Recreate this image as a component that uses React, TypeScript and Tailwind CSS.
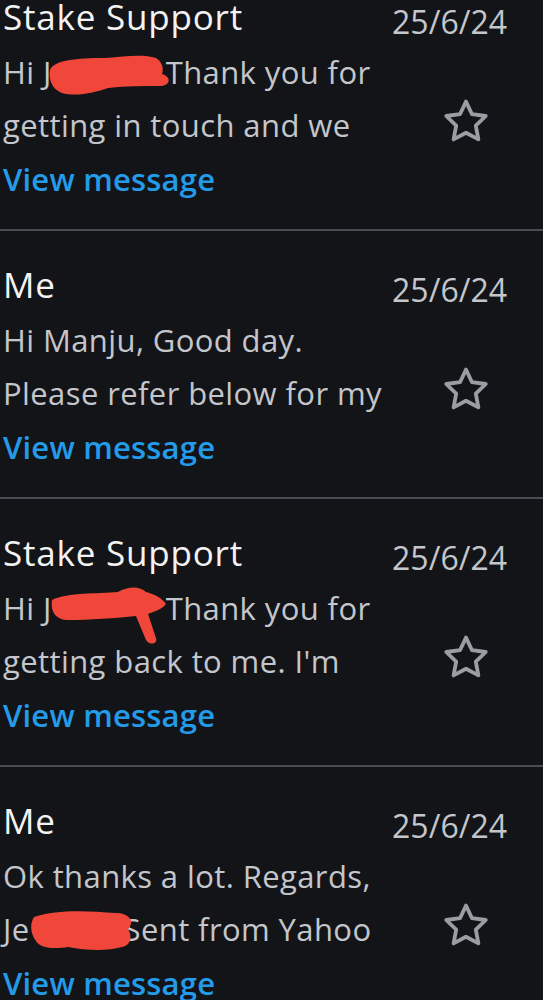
import React from "react";

const Star = () => (
  <svg width="48" height="46" viewBox="0 0 24 23" fill="none" stroke="#9a9da2" strokeWidth="1.9" strokeLinejoin="round">
    <path d="M12 1.8l3 6.3 6.9.9-5 4.8 1.3 6.9L12 17.4l-6.2 3.3 1.3-6.9-5-4.8 6.9-.9z" />
  </svg>
);

const Redact = ({ w, variant }: { w: number; variant: number }) => (
  <span className="relative inline-block align-baseline" style={{ width: w }}>
    &nbsp;
    {variant === 1 && (
      <svg className="absolute left-[-6px] top-[6px]" width="130" height="46" viewBox="0 0 130 46">
        <path d="M4 18 C8 8 30 6 60 6 C80 4 98 2 110 6 C116 10 118 16 116 22 C124 24 126 32 116 34 C98 34 80 34 62 36 C50 40 36 44 20 42 C8 40 2 30 4 18 Z" fill="#f0473a" />
      </svg>
    )}
    {variant === 2 && (
      <svg className="absolute left-[-4px] top-[2px]" width="130" height="64" viewBox="0 0 130 64">
        <path d="M4 16 C20 8 50 10 70 8 C80 2 92 2 98 8 C106 10 114 14 118 20 C114 26 104 28 100 30 L108 54 C110 60 102 62 98 56 L88 32 C70 34 40 36 20 36 C8 36 2 28 4 16 Z" fill="#f0473a" />
      </svg>
    )}
    {variant === 3 && (
      <svg className="absolute left-[-2px] top-[4px]" width="110" height="48" viewBox="0 0 110 48">
        <path d="M6 10 C30 2 60 4 88 6 C100 6 108 14 100 22 C104 28 104 38 94 40 C80 44 60 44 40 40 C28 42 12 42 8 34 C2 26 2 16 6 10 Z" fill="#f0473a" />
      </svg>
    )}
  </span>
);

type Row = {
  title: string;
  line1: React.ReactNode;
  line2: React.ReactNode;
};

const rows: Row[] = [
  {
    title: "Stake Support",
    line1: (
      <>
        Hi J<Redact w={114} variant={1} />Thank you for
      </>
    ),
    line2: "getting in touch and we",
  },
  {
    title: "Me",
    line1: "Hi Manju, Good day.",
    line2: "Please refer below for my",
  },
  {
    title: "Stake Support",
    line1: (
      <>
        Hi J<Redact w={114} variant={2} />Thank you for
      </>
    ),
    line2: "getting back to me. I'm",
  },
  {
    title: "Me",
    line1: "Ok thanks a lot. Regards,",
    line2: (
      <>
        Je<Redact w={94} variant={3} />Sent from Yahoo
      </>
    ),
  },
];

export default function App() {
  return (
    <div
      className="w-[543px] h-[1000px] overflow-hidden bg-[#131418]"
      style={{ fontFamily: '"Open Sans", "Noto Sans", sans-serif' }}
    >
      <div className="-mt-[37px]">
        {rows.map((r, i) => (
          <div key={i} className={`flex pl-[3px] pr-[36px] pt-[24px] pb-[22px] ${i > 0 ? "border-t-2 border-[#4b4c51]" : ""}`}>
            <div className="flex-1 min-w-0">
              <div className="text-[35px] leading-[59px] tracking-[0.8px] text-[#f3f3f3] whitespace-nowrap">{r.title}</div>
              <div className="text-[31px] leading-[53px] tracking-[0.4px] text-[#c3c6cb] whitespace-nowrap">{r.line1}</div>
              <div className="text-[31px] leading-[53px] tracking-[0.4px] text-[#c3c6cb] whitespace-nowrap">{r.line2}</div>
              <div className="text-[31px] leading-[55px] font-semibold text-[#239be8] tracking-[0.2px] whitespace-nowrap">View message</div>
            </div>
            <div className="flex flex-col items-end">
              <div className="text-[32px] leading-[70px] text-[#c3c6cb] whitespace-nowrap">25/6/24</div>
              <div className="flex-1 flex items-center justify-end w-full pr-[17px] pb-[22px]">
                <Star />
              </div>
            </div>
          </div>
        ))}
      </div>
    </div>
  );
}
